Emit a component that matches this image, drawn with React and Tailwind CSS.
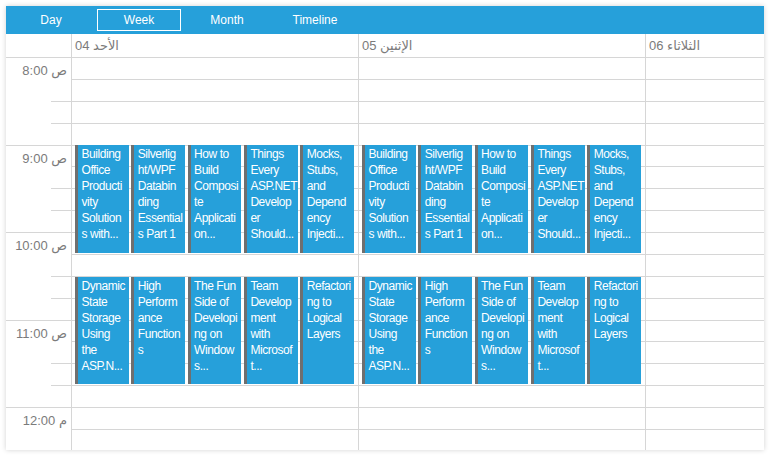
import React from 'react';

const views = ['Day', 'Week', 'Month', 'Timeline'];

const hours = [
    { label: '8:00 ص', slots: 4 },
    { label: '9:00 ص', slots: 4 },
    { label: '10:00 ص', slots: 4 },
    { label: '11:00 ص', slots: 4 },
    { label: '12:00 م', slots: 2 },
];

const days = [
    { title: 'الأحد 04', width: 'w-[287px]', events: true, last: false },
    { title: 'الإثنين 05', width: 'w-[287px]', events: true, last: false },
    { title: 'الثلاثاء 06', width: 'flex-1', events: false, last: true },
];

// each event is written out line by line, as the picture wraps it
const morning = [
    ['Building', 'Office', 'Producti', 'vity', 'Solution', 's with...'],
    ['Silverlig', 'ht/WPF', 'Databin', 'ding', 'Essential', 's Part 1'],
    ['How to', 'Build', 'Composi', 'te', 'Applicati', 'on...'],
    ['Things', 'Every', 'ASP.NET', 'Develop', 'er', 'Should...'],
    ['Mocks,', 'Stubs,', 'and', 'Depend', 'ency', 'Injecti...'],
];

const late = [
    ['Dynamic', 'State', 'Storage', 'Using', 'the', 'ASP.N...'],
    ['High', 'Perform', 'ance', 'Function', 's'],
    ['The Fun', 'Side of', 'Developi', 'ng on', 'Window', 's...'],
    ['Team', 'Develop', 'ment', 'with', 'Microsof', 't...'],
    ['Refactori', 'ng to', 'Logical', 'Layers'],
];

const totalSlots = hours.reduce((n, h) => n + h.slots, 0);

const EventCard = ({ lines }) => (
    <div className="flex-1 min-w-0 bg-[#26a0da] border-l-[3px] border-[#6f6f6f] pl-[3.5px] pt-[1px] overflow-hidden text-white text-[12px] leading-[16px] tracking-[-0.45px]">
        {lines.map((line, i) => (
            <div key={i} className="whitespace-nowrap">{line}</div>
        ))}
    </div>
);

const EventRow = ({ items, top }) => (
    <div className={`absolute left-[3px] right-[4px] flex gap-[2.5px] ${top}`}>
        {items.map((lines, i) => (
            <EventCard key={i} lines={lines} />
        ))}
    </div>
);

const TimeColumn = () => (
    <div className="w-[66px] shrink-0 flex flex-col border-r border-[#d6d6d6]">
        <div className="h-[24px] border-b border-[#d6d6d6]" />
        {hours.map((hour, hi) => (
            <div key={hi} className="flex flex-col">
                {Array.from({ length: hour.slots }).map((_, si) => {
                    const endOfHour = si === hour.slots - 1;
                    const isLast = hi === hours.length - 1 && endOfHour;
                    return (
                        <div key={si} className="h-[21.875px] flex flex-col">
                            <div className="flex-1 flex justify-end pr-[4px]">
                                {si === 0 && (
                                    <span className="whitespace-nowrap text-[13px] leading-[22px] pt-[2px] text-[#7b7b7b] tracking-[-0.3px]">
                                        {hour.label}
                                    </span>
                                )}
                            </div>
                            {!isLast && (
                                <div className={`h-px bg-[#d6d6d6] ${endOfHour ? '' : 'ml-[45px]'}`} />
                            )}
                        </div>
                    );
                })}
            </div>
        ))}
    </div>
);

const DayColumn = ({ day }) => (
    <div className={`${day.width} shrink-0 flex flex-col ${day.last ? '' : 'border-r border-[#d6d6d6]'}`}>
        <div className="h-[24px] border-b border-[#d6d6d6] pl-[3px] text-[13px] leading-[23px] text-[#7b7b7b] whitespace-nowrap">
            {day.title}
        </div>
        <div className="relative flex flex-col">
            {Array.from({ length: totalSlots }).map((_, i) => (
                <div
                    key={i}
                    className={`h-[21.875px] ${i === totalSlots - 1 ? '' : 'border-b border-[#d6d6d6]'}`}
                />
            ))}
            {day.events && (
                <>
                    <EventRow items={morning} top="top-[87px] h-[108px]" />
                    <EventRow items={late} top="top-[219px] h-[107px]" />
                </>
            )}
        </div>
    </div>
);

export default function App() {
    return (
        <div className="min-h-screen bg-white pt-[6px] pl-[6px] font-['Liberation_Sans','DejaVu_Sans',sans-serif]">
            <div className="w-[758px] h-[444px] overflow-hidden bg-white flex flex-col shadow-[0_0_5px_rgba(0,0,0,0.18)]">
                <div className="h-[28px] shrink-0 bg-[#26a0da] flex items-center pl-[3px] gap-[4px]">
                    {views.map((view) => (
                        <div
                            key={view}
                            className={`w-[84px] h-[22px] flex items-center justify-center text-white text-[12px] ${
                                view === 'Week' ? 'border border-white' : 'border border-transparent'
                            }`}
                        >
                            {view}
                        </div>
                    ))}
                </div>
                <div className="flex flex-1">
                    <TimeColumn />
                    {days.map((day, i) => (
                        <DayColumn key={i} day={day} />
                    ))}
                </div>
            </div>
        </div>
    );
}
